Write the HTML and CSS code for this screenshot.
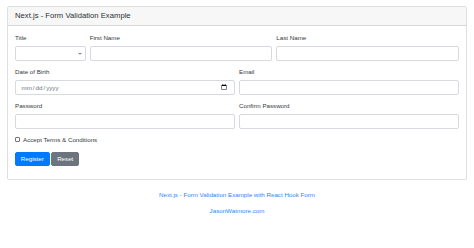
FILE: index.html
```html
<!DOCTYPE html>
<html>
<head>
	<title>Next.js - Form Validation Example</title>
	<link rel="stylesheet" href="styles.css">
</head>
<body>
	<div class="container">
		<div class="card">
			<h5 class="card-header">Next.js - Form Validation Example</h5>
			<div class="card-body">
				<form>
					<div class="form-row">
						<div class="form-group col-2">
							<label>Title</label>
							<div class="select-wrap">
								<select class="form-control">
									<option></option>
									<option>Mr</option>
									<option>Mrs</option>
									<option>Miss</option>
									<option>Ms</option>
								</select>
								<svg class="chevron" width="4" height="3" viewBox="0 0 8 6"><path d="M1 1.5 L4 4.5 L7 1.5" fill="none" stroke="#333" stroke-width="1.6"/></svg>
							</div>
						</div>
						<div class="form-group col-5">
							<label>First Name</label>
							<input type="text" class="form-control">
						</div>
						<div class="form-group col-5">
							<label>Last Name</label>
							<input type="text" class="form-control">
						</div>
					</div>
					<div class="form-row">
						<div class="form-group col-6">
							<label>Date of Birth</label>
							<input type="date" class="form-control">
						</div>
						<div class="form-group col-6">
							<label>Email</label>
							<input type="text" class="form-control">
						</div>
					</div>
					<div class="form-row">
						<div class="form-group col-6">
							<label>Password</label>
							<input type="password" class="form-control">
						</div>
						<div class="form-group col-6">
							<label>Confirm Password</label>
							<input type="password" class="form-control">
						</div>
					</div>
					<div class="form-check">
						<input type="checkbox" id="acceptTerms">
						<label for="acceptTerms">Accept Terms &amp; Conditions</label>
					</div>
					<div class="buttons">
						<button type="submit" class="btn btn-primary">Register</button>
						<button type="reset" class="btn btn-secondary">Reset</button>
					</div>
				</form>
			</div>
		</div>
	</div>
	<div class="credits">
		<p><a href="">Next.js - Form Validation Example with React Hook Form</a></p>
		<p><a href="">JasonWatmore.com</a></p>
	</div>
</body>
</html>
```

FILE: styles.css
```css
*{
	box-sizing: border-box;
}
body{
	margin: 0;
	font-family: "Liberation Sans", Arial, sans-serif;
	font-size: 6.2px;
	line-height: 9.2px;
	color: #343a40;
	background-color: #fff;
}
.container{
	width: 460px;
	margin: 6px auto 0;
}
.card{
	border: 1px solid rgba(0,0,0,.125);
	border-radius: 2px;
}
.card-header{
	margin: 0;
	height: 19px;
	padding: 0 7px;
	font-size: 7.7px;
	font-weight: normal;
	line-height: 18px;
	color: #2b3035;
	background-color: #f7f7f7;
	border-bottom: 1px solid rgba(0,0,0,.125);
}
.card-body{
	padding: 7px;
}
.form-row{
	display: grid;
	grid-template-columns: repeat(12, 1fr);
	column-gap: 4px;
}
.col-2{
	grid-column: span 2;
}
.col-5{
	grid-column: span 5;
}
.col-6{
	grid-column: span 6;
}
.form-group{
	margin-bottom: 6.5px;
}
.form-group label{
	display: block;
	margin-bottom: 4px;
}
.form-control{
	display: block;
	width: 100%;
	height: 14.3px;
	margin: 0;
	padding: 0 4.5px;
	font-family: inherit;
	font-size: 6.2px;
	color: #6c757d;
	background-color: #fff;
	border: 1px solid #d6dadf;
	border-radius: 2px;
	outline: none;
}
select.form-control{
	appearance: none;
	-webkit-appearance: none;
}
.select-wrap{
	position: relative;
}
.chevron{
	position: absolute;
	right: 3.5px;
	top: 6px;
}
.form-check{
	display: flex;
	align-items: center;
	gap: 3.5px;
	margin-bottom: 7.5px;
}
.form-check input{
	appearance: none;
	-webkit-appearance: none;
	width: 4.5px;
	height: 4.5px;
	margin: 0;
	border: 1px solid #767676;
	border-radius: 1px;
	background-color: #fff;
}
.buttons{
	display: flex;
	gap: 1.7px;
	margin-bottom: 6.5px;
}
.btn{
	height: 14px;
	padding: 0 4.8px;
	font-family: inherit;
	font-size: 6.2px;
	color: #fff;
	border: 1px solid;
	border-radius: 2px;
}
.btn-primary{
	background-color: #007bff;
	border-color: #007bff;
}
.btn-secondary{
	background-color: #6c757d;
	border-color: #6c757d;
}
.credits{
	margin-top: 9.7px;
	text-align: center;
}
.credits p{
	margin: 0 0 7px;
}
.credits a{
	color: #2f86f5;
	text-decoration: none;
}
```
